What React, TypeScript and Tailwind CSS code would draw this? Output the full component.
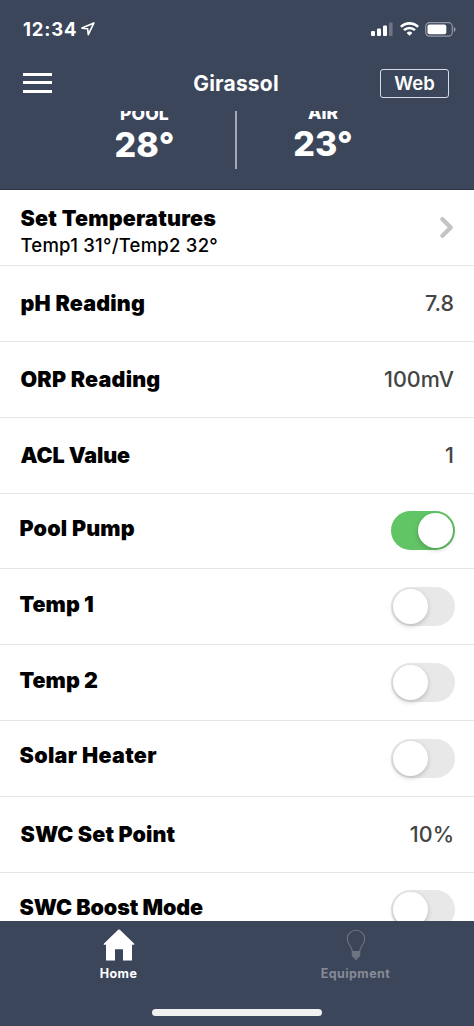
import React, { useState } from 'react';

interface Row {
  label: string;
  tracking: string;
  value?: string;
  detail?: string;
}

const ROWS: Row[] = [
  { label: 'Set Temperatures', tracking: 'tracking-[0.23px]', detail: 'Temp1 31°/Temp2 32°' },
  { label: 'pH Reading', tracking: 'tracking-[0.2px]', value: '7.8' },
  { label: 'ORP Reading', tracking: 'tracking-[0.2px]', value: '100mV' },
  { label: 'ACL Value', tracking: 'tracking-[-0.1px]', value: '1' },
  { label: 'Pool Pump', tracking: 'tracking-[0.2px]' },
  { label: 'Temp 1', tracking: 'tracking-normal' },
  { label: 'Temp 2', tracking: 'tracking-normal' },
  { label: 'Solar Heater', tracking: 'tracking-[0.32px]' },
  { label: 'SWC Set Point', tracking: 'tracking-[0.1px]', value: '10%' },
  { label: 'SWC Boost Mode', tracking: 'tracking-[-0.08px]' },
];

const StatusBar: React.FC = () => (
  <div className="h-[58px] pl-[23px] pr-[18px] flex items-center justify-between">
    <div className="flex items-center gap-[4px]">
      <span className="text-[18.5px] font-bold leading-none tracking-[0.8px]">12:34</span>
      <svg width="14" height="14" viewBox="0 0 14 14" fill="none" stroke="currentColor" strokeWidth="1.6" strokeLinejoin="round">
        <path d="M12.9.9 1 6.1l5.6.6.7 5.9z" />
      </svg>
    </div>
    <div className="flex items-center gap-[6.5px]">
      <svg width="22" height="14" viewBox="0 0 22 14" fill="currentColor">
        <rect x="0" y="9" width="4" height="5" rx="1" />
        <rect x="6" y="6.5" width="4" height="7.5" rx="1" />
        <rect x="12" y="3.5" width="4" height="10.5" rx="1" />
        <rect x="18" y="0.5" width="3.6" height="13.5" rx="1" opacity="0.25" />
      </svg>
      <svg width="19" height="14" viewBox="0 0 19 14" fill="none" stroke="currentColor" strokeWidth="2.6">
        <path d="M.9 4.9a12.2 12.2 0 0 1 17.2 0" />
        <path d="M4 8.2a7.8 7.8 0 0 1 11 0" />
        <path d="M9.5 13.8 6.6 10.9a4.1 4.1 0 0 1 5.8 0z" fill="currentColor" stroke="none" />
      </svg>
      <svg width="31" height="15" viewBox="0 0 31 15">
        <rect x="0.7" y="0.7" width="26.6" height="13.4" rx="3.8" fill="none" stroke="#fff" strokeOpacity="0.45" strokeWidth="1.2" />
        <rect x="2.5" y="2.5" width="18.8" height="9.8" rx="2" fill="#fff" />
        <path d="M28.9 5v4.8c1-.4 1.6-1.3 1.6-2.4s-.6-2-1.6-2.4z" fill="#fff" opacity="0.5" />
      </svg>
    </div>
  </div>
);

const Toggle: React.FC<{ on: boolean; onClick: () => void }> = ({ on, onClick }) => (
  <button
    onClick={onClick}
    className={`w-[64.5px] h-[39px] rounded-full p-[2px] flex items-center shrink-0 ${
      on ? 'bg-[#61c465] justify-end' : 'bg-[#e8e8e8] justify-start'
    }`}
  >
    <span className="size-[35px] rounded-full bg-white shadow-[0_2px_5px_rgba(0,0,0,0.2)]"></span>
  </button>
);

const App: React.FC = () => {
  const [switches, setSwitches] = useState<Record<string, boolean>>({ 'Pool Pump': true });

  const toggle = (label: string) => {
    setSwitches(prev => ({ ...prev, [label]: !prev[label] }));
  };

  return (
    <div className="w-[474px] h-[1026px] flex flex-col overflow-hidden bg-white font-['Inter',sans-serif]">
      <header className="h-[190.4px] shrink-0 flex flex-col bg-[#3c465a] text-white border-b border-[#2b3342]">
        <StatusBar />
        <div className="h-[53px] shrink-0 pl-[23px] pr-[25px] pb-[4px] grid grid-cols-[1fr_auto_1fr] items-center">
          <button className="w-[29px] flex flex-col gap-[5.5px]">
            <span className="h-[3px] w-full bg-white"></span>
            <span className="h-[3px] w-full bg-white"></span>
            <span className="h-[3px] w-full bg-white"></span>
          </button>
          <h1 className="pt-[2px] text-[21px] font-bold leading-none tracking-[0.2px]">Girassol</h1>
          <button className="justify-self-end mt-[2px] w-[69px] h-[29px] rounded-[3px] border-[1.5px] border-[#d5dbe8] text-[18.5px] font-semibold leading-none">
            Web
          </button>
        </div>

        {/* temperatures, scrolled partly under the title bar */}
        <div className="h-[78px] overflow-hidden flex items-start">
          <div className="w-[235px] pl-[54px] flex flex-col items-center">
            <span className="-mt-[7px] h-5 text-[17.5px] font-extrabold leading-5 tracking-[0.1px]">POOL</span>
            <span className="mt-[3.5px] text-[34px] font-extrabold leading-[34px]">28°</span>
          </div>
          <div className="w-[2px] h-[58px] bg-[#a2a9b6]"></div>
          <div className="w-[237px] pr-[65px] flex flex-col items-center">
            <span className="-mt-[8px] h-5 text-[17.5px] font-extrabold leading-5">AIR</span>
            <span className="mt-[3.5px] text-[34px] font-extrabold leading-[34px]">23°</span>
          </div>
        </div>
      </header>

      <main className="flex-1 min-h-0 overflow-hidden text-black">
        {ROWS.map(row => {
          const isSwitch = !row.value && !row.detail;
          return (
            <div
              key={row.label}
              className={`h-[75.8px] flex items-center justify-between border-b border-[#e6e6e6] ${
                isSwitch ? 'pl-[19.5px] pr-[19px]' : 'pl-[20.5px] pr-[20px]'
              }`}
            >
              <div className={isSwitch ? 'pb-[5px]' : row.detail ? 'pt-[8px]' : ''}>
                <div className={`text-[21.5px] font-black leading-[27px] ${row.tracking}`}>{row.label}</div>
                {row.detail && (
                  <div className="text-[18.5px] font-medium leading-[27px] tracking-[0.23px]">{row.detail}</div>
                )}
              </div>
              {row.value && <span className="text-[21.5px] font-medium text-[#444]">{row.value}</span>}
              {row.detail && (
                <svg width="15" height="23" viewBox="0 0 15 23" fill="none" stroke="#c4c4c4" strokeWidth="4.4" strokeLinecap="round" strokeLinejoin="round">
                  <path d="M3.4 3.2 11.7 11.5 3.4 19.8" />
                </svg>
              )}
              {isSwitch && <Toggle on={!!switches[row.label]} onClick={() => toggle(row.label)} />}
            </div>
          );
        })}
      </main>

      <nav className="h-[105px] shrink-0 bg-[#3c465a] flex flex-col items-center">
        <div className="w-full h-[88px] flex">
          <button className="flex-1 flex flex-col items-center pt-2 text-white">
            <svg width="32" height="32" viewBox="0 0 32 32" fill="currentColor">
              <path d="M15.2.8a1.2 1.2 0 0 1 1.6 0L31 14.4c.6.6.4 1.4-.5 1.4H29V31.5h-9V20.2h-8V31.5H3V15.8H1.5c-.9 0-1.1-.8-.5-1.4z" />
            </svg>
            <span className="mt-[3.5px] text-[12.5px] font-bold leading-[18px] tracking-[0.4px]">Home</span>
          </button>
          <button className="flex-1 flex flex-col items-center pt-2 text-[#868b95]">
            <svg width="20" height="32" viewBox="0 0 20 32" fill="none" stroke="#6e7480" strokeWidth="1.1">
              <path d="M6.3 22.6C6.3 17.4 1.2 15.6 1.2 10a8.8 8.8 0 0 1 17.6 0c0 5.6-5.1 7.4-5.1 12.6z" />
              <path d="M6.3 22.6h7.4v4.4l-2 1.3L10 30.8l-1.7-2.500-2-1.300z" fill="#6e7480" />
            </svg>
            <span className="mt-[3.5px] text-[12.5px] font-bold leading-[18px] tracking-[0.4px]">Equipment</span>
          </button>
        </div>
        <div className="w-[170px] h-[6.5px] rounded-full bg-[#f0f0f1]"></div>
      </nav>
    </div>
  );
};

export default App;
